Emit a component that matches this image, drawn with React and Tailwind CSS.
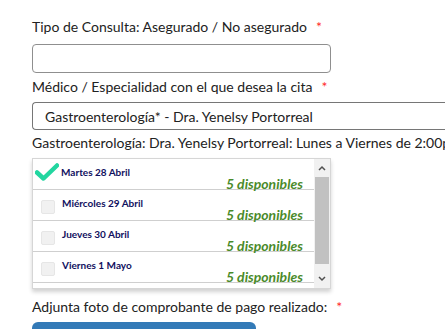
import React from "react";

const rows = [
  { label: "Martes 28 Abril", checked: true },
  { label: "Miércoles 29 Abril" },
  { label: "Jueves 30 Abril" },
  { label: "Viernes 1 Mayo" },
];

function Check() {
  return (
    <svg width="24" height="18" viewBox="0 0 24 18" className="shrink-0">
      <path d="M2 9.5 L8.5 15.5 L22 2.5" fill="none" stroke="#22d6a0" strokeWidth="4.5" strokeLinecap="round" strokeLinejoin="round" />
    </svg>
  );
}

export default function App() {
  return (
    <div className="w-[445px] h-[329px] overflow-hidden bg-white text-[#222]" style={{ fontFamily: "Lato, 'Open Sans', sans-serif" }}>
      <div className="pl-[32px] pt-[18px]">
        <div className="text-[14px] leading-[17px] h-[17px] flex items-center">
          Tipo de Consulta: Asegurado / No asegurado<span className="text-[#ff2a2a] ml-[9px]">*</span>
        </div>
        <div className="mt-[9px] w-[299px] h-[29px] border border-[#8f8f8f] rounded-[4px]" />
        <div className="mt-[5px] text-[14px] leading-[17px] h-[17px] flex items-center">
          Médico / Especialidad con el que desea la cita<span className="text-[#ff2a2a] ml-[9px]">*</span>
        </div>
        <div className="mt-[7px] w-[440px] h-[28px] border border-[#767676] border-r-0 rounded-l-[4px] flex items-center pl-[12px] text-[14px] whitespace-nowrap">
          Gastroenterología* - Dra. Yenelsy Portorreal
        </div>
        <div className="mt-[4px] w-[413px] overflow-hidden text-[14px] leading-[17px] whitespace-nowrap">
          Gastroenterología: Dra. Yenelsy Portorreal: Lunes a Viernes de 2:00p
        </div>
        <div className="mt-[7px] w-[299px] h-[131px] border border-[#d6d6d6] shadow-[0_3px_4px_rgba(0,0,0,0.18)] flex">
          <div className="flex-1 flex flex-col">
            {rows.map((r, i) => (
              <div key={i} className="h-[31px] shrink-0 border-b border-[#cfcfcf] relative">
                <div className="absolute left-[2px] top-[4px] flex items-center h-[18px]">
                  {r.checked ? (
                    <Check />
                  ) : (
                    <div className="w-[14px] h-[14px] ml-[6px] mr-[5px] mt-[8px] bg-[#f1f1f1] border border-[#e6e6e6] rounded-[2px]" />
                  )}
                  <span className={`text-[10px] font-bold text-[#10105e] ${r.checked ? "ml-[2px]" : "ml-[2px] mt-[1px]"}`}>{r.label}</span>
                </div>
                <div className="absolute right-[11px] bottom-[-3px] text-[14px] italic font-bold text-[#4a8a2a] leading-[17px]">
                  5 disponibles
                </div>
              </div>
            ))}
          </div>
          <div className="w-[16px] bg-[#f1f1f1] flex flex-col items-center">
            <div className="h-[18px] flex items-center justify-center">
              <svg width="8" height="6" viewBox="0 0 8 6"><path d="M1 5 L4 2 L7 5" fill="none" stroke="#505050" strokeWidth="1.5" /></svg>
            </div>
            <div className="w-[14px] h-[87px] bg-[#c1c1c1]" />
            <div className="flex-1" />
            <div className="h-[18px] flex items-center justify-center">
              <svg width="8" height="6" viewBox="0 0 8 6"><path d="M1 1 L4 4 L7 1" fill="none" stroke="#505050" strokeWidth="1.5" /></svg>
            </div>
          </div>
        </div>
        <div className="mt-[9px] text-[14px] leading-[17px] h-[17px] flex items-center">
          Adjunta foto de comprobante de pago realizado:<span className="text-[#ff2a2a] ml-[9px]">*</span>
        </div>
        <div className="mt-[7px] w-[224px] h-[30px] bg-[#337ab7] rounded-[6px]" />
      </div>
    </div>
  );
}
